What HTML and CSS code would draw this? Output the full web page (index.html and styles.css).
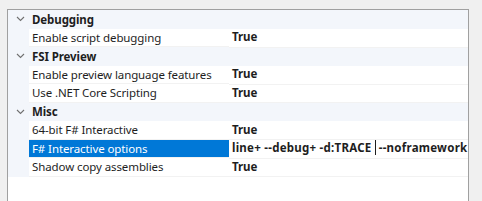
FILE: index.html
```html
<!DOCTYPE html>
<html lang="en">
<head>
    <meta charset="UTF-8">
    <title>F# Interactive Options</title>
    <link rel="stylesheet" href="styles.css">
</head>
<body>
    <div class="grid">
        <div class="category">
            <span class="toggle"><svg width="9" height="6" viewBox="0 0 9 6"><path d="M1 1 L4.5 4.5 L8 1" /></svg></span>
            <span class="cat-name">Debugging</span>
        </div>
        <div class="prop">
            <span class="gutter"></span>
            <span class="name">Enable script debugging</span>
            <span class="value">True</span>
        </div>

        <div class="category">
            <span class="toggle"><svg width="9" height="6" viewBox="0 0 9 6"><path d="M1 1 L4.5 4.5 L8 1" /></svg></span>
            <span class="cat-name">FSI Preview</span>
        </div>
        <div class="prop">
            <span class="gutter"></span>
            <span class="name">Enable preview language features</span>
            <span class="value">True</span>
        </div>
        <div class="prop">
            <span class="gutter"></span>
            <span class="name">Use .NET Core Scripting</span>
            <span class="value">True</span>
        </div>

        <div class="category">
            <span class="toggle"><svg width="9" height="6" viewBox="0 0 9 6"><path d="M1 1 L4.5 4.5 L8 1" /></svg></span>
            <span class="cat-name">Misc</span>
        </div>
        <div class="prop">
            <span class="gutter"></span>
            <span class="name">64-bit F# Interactive</span>
            <span class="value">True</span>
        </div>
        <div class="prop selected">
            <span class="gutter"></span>
            <span class="name">F# Interactive options</span>
            <span class="value editing">line+ --debug+ -d:TRACE <span class="caret"></span>--noframework</span>
        </div>
        <div class="prop">
            <span class="gutter"></span>
            <span class="name">Shadow copy assemblies</span>
            <span class="value">True</span>
        </div>
    </div>
</body>
</html>
```

FILE: styles.css
```css
body {
    margin: 0;
    background-color: #f0f0f0;
    font-family: "Noto Sans", "Open Sans", sans-serif;
    font-size: 11.5px;
    letter-spacing: -0.1px;
    color: #1e1e1e;
    height: 201px;
    overflow: hidden;
}
.grid {
    margin: 9px 0 0 7px;
    width: 460px;
    height: 200px;
    background-color: #ffffff;
    border: 1px solid #a0a0a0;
    border-bottom: none;
    overflow: hidden;
}
.category,
.prop {
    display: flex;
    align-items: center;
    height: 18.5px;
    white-space: nowrap;
}
.category {
    background-color: #f3f6fb;
}
.toggle {
    width: 21px;
    display: flex;
    justify-content: center;
    padding-left: 4px;
    box-sizing: border-box;
}
.toggle svg path {
    fill: none;
    stroke: #707070;
    stroke-width: 1.1;
}
.cat-name {
    font-weight: bold;
    padding-left: 3px;
}
.gutter {
    width: 21px;
    height: 100%;
    background-color: #f3f6fb;
    flex-shrink: 0;
}
.name {
    width: 200px;
    height: 100%;
    line-height: 18.5px;
    padding-left: 3px;
    box-sizing: border-box;
    border-bottom: 1px solid #f2f2f2;
    flex-shrink: 0;
}
.value {
    height: 100%;
    line-height: 18.5px;
    padding-left: 3px;
    font-weight: bold;
    border-bottom: 1px solid #f2f2f2;
    flex-grow: 1;
}
.selected .name {
    background-color: #0078d7;
    color: #ffffff;
}
.editing {
    letter-spacing: 0.25px;
}
.caret {
    display: inline-block;
    width: 1px;
    height: 15px;
    background-color: #1e1e1e;
    vertical-align: -3px;
    margin-right: 3px;
}
```
